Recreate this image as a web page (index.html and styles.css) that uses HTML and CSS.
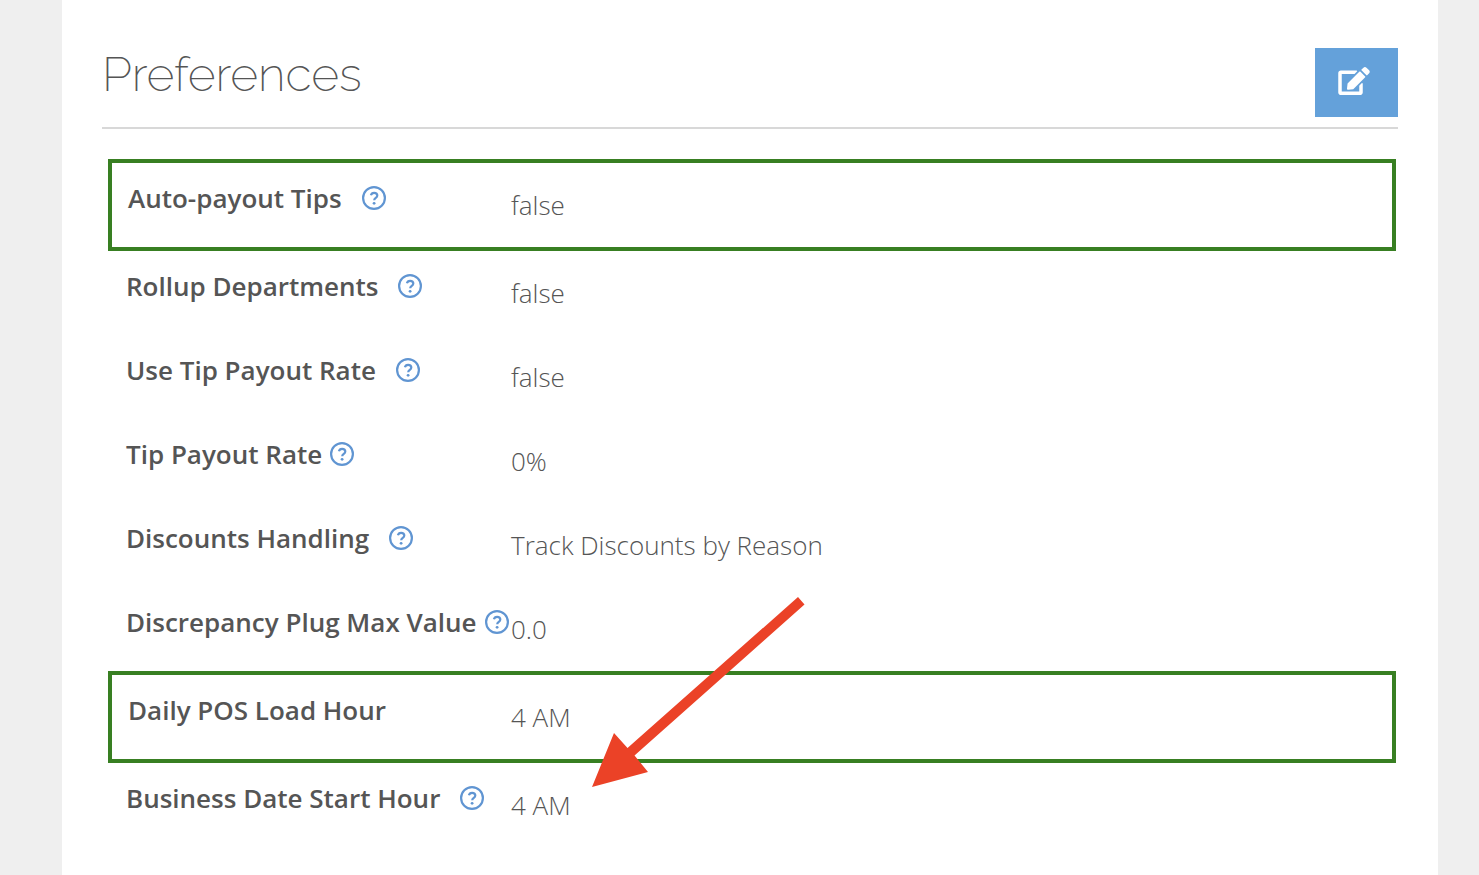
FILE: index.html
```html
<!DOCTYPE html>
<html lang="en">
<head>
  <meta charset="UTF-8">
  <meta name="viewport" content="width=device-width, initial-scale=1.0">
  <title>Preferences</title>
  <link rel="stylesheet" href="styles.css">
</head>
<body>
  <svg class="sprite" aria-hidden="true">
    <symbol id="help" viewBox="0 0 24 24">
      <circle cx="12" cy="12" r="10.900" fill="none" stroke="currentColor" stroke-width="2.200"/>
      <path d="M8.900 9.300c.4-1.700 1.600-2.500 3.200-2.500 1.900 0 3.200 1.100 3.200 2.700 0 2.300-3.100 2.300-3.100 4.700" fill="none" stroke="currentColor" stroke-width="2.200"/>
      <circle cx="12.100" cy="17.300" r="1.400" fill="currentColor"/>
    </symbol>
  </svg>

  <main class="panel">
    <header class="panel-header">
      <h1>Preferences</h1>
      <button class="edit-button" type="button" aria-label="Edit preferences">
        <svg viewBox="0 0 576 512" width="32" height="28" fill="currentColor">
          <path d="M402.600 83.200l90.200 90.200c3.800 3.800 3.800 10 0 13.800L274.400 405.600l-92.800 10.300c-12.400 1.400-22.900-9.100-21.500-21.500l10.300-92.800L388.800 83.200c3.800-3.800 10-3.800 13.800 0zm162-22.900l-48.800-48.800c-15.200-15.200-39.900-15.200-55.200 0l-35.400 35.400c-3.800 3.800-3.800 10 0 13.800l90.200 90.200c3.800 3.800 10 3.800 13.800 0l35.400-35.400c15.200-15.300 15.200-40 0-55.200zM384 346.200V448H64V128h229.800c3.200 0 6.200-1.300 8.500-3.500l40-40c7.600-7.600 2.200-20.500-8.500-20.500H48C21.500 64 0 85.500 0 112v352c0 26.500 21.500 48 48 48h352c26.500 0 48-21.500 48-48V306.200c0-10.700-12.900-16-20.500-8.500l-40 40c-2.200 2.300-3.500 5.300-3.500 8.500z"/>
        </svg>
      </button>
    </header>

    <div class="preferences">
      <dl class="row highlighted">
        <dt>Auto-payout Tips <button class="help spaced" type="button" aria-label="Help: Auto-payout Tips"><svg><use href="#help"/></svg></button></dt>
        <dd>false</dd>
      </dl>
      <dl class="row">
        <dt>Rollup Departments <button class="help spaced" type="button" aria-label="Help: Rollup Departments"><svg><use href="#help"/></svg></button></dt>
        <dd>false</dd>
      </dl>
      <dl class="row">
        <dt>Use Tip Payout Rate <button class="help spaced" type="button" aria-label="Help: Use Tip Payout Rate"><svg><use href="#help"/></svg></button></dt>
        <dd>false</dd>
      </dl>
      <dl class="row">
        <dt>Tip Payout Rate <button class="help" type="button" aria-label="Help: Tip Payout Rate"><svg><use href="#help"/></svg></button></dt>
        <dd>0%</dd>
      </dl>
      <dl class="row">
        <dt>Discounts Handling <button class="help spaced" type="button" aria-label="Help: Discounts Handling"><svg><use href="#help"/></svg></button></dt>
        <dd>Track Discounts by Reason</dd>
      </dl>
      <dl class="row">
        <dt>Discrepancy Plug Max Value <button class="help" type="button" aria-label="Help: Discrepancy Plug Max Value"><svg><use href="#help"/></svg></button></dt>
        <dd>0.0</dd>
      </dl>
      <dl class="row highlighted">
        <dt>Daily POS Load Hour</dt>
        <dd>4 AM</dd>
      </dl>
      <dl class="row">
        <dt>Business Date Start Hour <button class="help spaced" type="button" aria-label="Help: Business Date Start Hour"><svg><use href="#help"/></svg></button></dt>
        <dd>4 AM</dd>
      </dl>

      <svg class="arrow" viewBox="0 0 213 190" aria-hidden="true">
        <path d="M0 190L22 136L35.500 151L206 0L212.500 7.500L42.500 158.500L56 175Z" fill="#eb4227"/>
      </svg>
    </div>
  </main>
</body>
</html>
```
FILE: styles.css
```css
* {
  box-sizing: border-box;
}
body {
  margin: 0;
  background: #efefef;
  color: #555;
  font-family: "Open Sans", sans-serif;
  font-size: 26px;
  line-height: 36px;
}
.sprite {
  display: none;
}
.panel {
  min-height: 100vh;
  margin: 0 41px 0 62px;
  padding: 48px 40px 28px;
  background: #fff;
}
.panel-header {
  display: flex;
  justify-content: space-between;
  align-items: flex-start;
  padding-bottom: 10px;
  border-bottom: 2px solid #d8d8d8;
}
h1 {
  margin: 0;
  font-family: Raleway, Lato, sans-serif;
  font-size: 48px;
  font-weight: 200;
  line-height: 52px;
}
button {
  padding: 0;
  border: 0;
  cursor: pointer;
}
.edit-button {
  display: flex;
  align-items: center;
  width: 83px;
  height: 69px;
  padding: 0 23px 4px;
  background: #64a1da;
  color: #fff;
}
.edit-button svg {
  flex: none;
}
.preferences {
  position: relative;
  margin: 30px 2px 0 6px;
}
.row {
  display: grid;
  grid-template-columns: 385px 1fr;
  min-height: 84px;
  margin: 0;
  padding: 17px 18px;
}
.highlighted {
  grid-template-columns: 383px 1fr;
  min-height: 92px;
  padding: 17px 16px;
  border: 4px solid #387f22;
}
dt {
  display: flex;
  align-items: center;
  gap: 8px;
  height: 36px;
  font-weight: 600;
  white-space: nowrap;
}
dd {
  margin: 7px 0 0;
  font-weight: 300;
}
.help {
  width: 24px;
  height: 24px;
  background: none;
  color: #6095d2;
}
.help svg {
  display: block;
  width: 24px;
  height: 24px;
}
.spaced {
  margin-left: 12px;
}
.arrow {
  position: absolute;
  top: 438px;
  left: 484px;
  width: 213px;
  height: 190px;
}
```
